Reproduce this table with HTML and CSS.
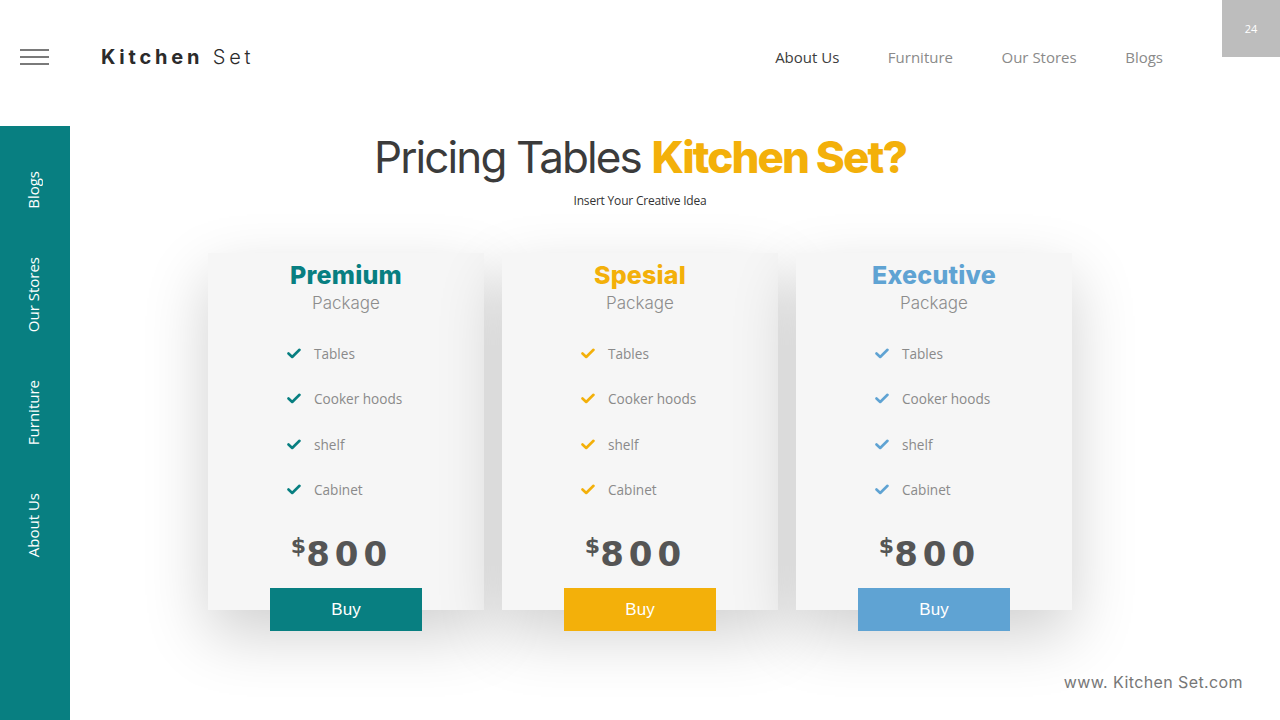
FILE: index.html
```html
<!DOCTYPE html>
<html lang="en">
<head>
<meta charset="utf-8">
<title>Kitchen Set - Pricing Tables</title>
<link rel="stylesheet" href="styles.css">
</head>
<body>
<div class="page">
  <header class="header">
    <div class="burger"><span></span><span></span><span></span></div>
    <div class="logo"><b>Kitchen</b> Set</div>
    <nav class="nav">
      <a class="active">About Us</a>
      <a>Furniture</a>
      <a>Our Stores</a>
      <a>Blogs</a>
    </nav>
    <div class="pagenum">24</div>
  </header>
  <div class="body">
    <aside class="sidebar">
      <span>Blogs</span>
      <span>Our Stores</span>
      <span>Furniture</span>
      <span>About Us</span>
    </aside>
    <main class="main">
      <h1 class="title">Pricing Tables <strong>Kitchen Set?</strong></h1>
      <p class="subtitle">Insert Your Creative Idea</p>
      <div class="cards">
        <div class="card teal">
          <h2 class="card-title">Premium</h2>
          <div class="card-sub">Package</div>
          <ul class="features">
            <li><svg viewBox="0 0 14 11"><path d="M1.5 5.5 L5.2 9 L12.5 1.8"/></svg>Tables</li>
            <li><svg viewBox="0 0 14 11"><path d="M1.5 5.5 L5.2 9 L12.5 1.8"/></svg>Cooker hoods</li>
            <li><svg viewBox="0 0 14 11"><path d="M1.5 5.5 L5.2 9 L12.5 1.8"/></svg>shelf</li>
            <li><svg viewBox="0 0 14 11"><path d="M1.5 5.5 L5.2 9 L12.5 1.8"/></svg>Cabinet</li>
          </ul>
          <div class="price"><sup>$</sup>800</div>
          <a class="buy">Buy</a>
        </div>
        <div class="card yellow">
          <h2 class="card-title">Spesial</h2>
          <div class="card-sub">Package</div>
          <ul class="features">
            <li><svg viewBox="0 0 14 11"><path d="M1.5 5.5 L5.2 9 L12.5 1.8"/></svg>Tables</li>
            <li><svg viewBox="0 0 14 11"><path d="M1.5 5.5 L5.2 9 L12.5 1.8"/></svg>Cooker hoods</li>
            <li><svg viewBox="0 0 14 11"><path d="M1.5 5.5 L5.2 9 L12.5 1.8"/></svg>shelf</li>
            <li><svg viewBox="0 0 14 11"><path d="M1.5 5.5 L5.2 9 L12.5 1.8"/></svg>Cabinet</li>
          </ul>
          <div class="price"><sup>$</sup>800</div>
          <a class="buy">Buy</a>
        </div>
        <div class="card blue">
          <h2 class="card-title">Executive</h2>
          <div class="card-sub">Package</div>
          <ul class="features">
            <li><svg viewBox="0 0 14 11"><path d="M1.5 5.5 L5.2 9 L12.5 1.8"/></svg>Tables</li>
            <li><svg viewBox="0 0 14 11"><path d="M1.5 5.5 L5.2 9 L12.5 1.8"/></svg>Cooker hoods</li>
            <li><svg viewBox="0 0 14 11"><path d="M1.5 5.5 L5.2 9 L12.5 1.8"/></svg>shelf</li>
            <li><svg viewBox="0 0 14 11"><path d="M1.5 5.5 L5.2 9 L12.5 1.8"/></svg>Cabinet</li>
          </ul>
          <div class="price"><sup>$</sup>800</div>
          <a class="buy">Buy</a>
        </div>
      </div>
      <div class="footer">www. Kitchen Set.com</div>
    </main>
  </div>
</div>
</body>
</html>
```
FILE: styles.css
```css
* { box-sizing: border-box; }
html, body { margin: 0; padding: 0; background: #fff; }
body { font-family: "Open Sans", "Noto Sans", sans-serif; }

.page {
  width: 1280px;
  height: 720px;
  display: flex;
  flex-direction: column;
  overflow: hidden;
}

/* header */
.header {
  height: 126px;
  padding-bottom: 13px;
  display: flex;
  align-items: center;
  flex-shrink: 0;
}
.burger {
  margin-left: 20px;
  width: 29px;
  display: flex;
  flex-direction: column;
  gap: 5px;
}
.burger span {
  display: block;
  height: 2px;
  background: #7a7a7a;
}
.logo {
  margin-left: 52px;
  font-family: "Inter", sans-serif;
  font-size: 20px;
  letter-spacing: 3.8px;
  color: #2b2b2b;
  font-weight: 300;
}
.logo b { font-weight: 700; }
.nav {
  margin-left: auto;
  display: flex;
  gap: 48.5px;
  margin-right: 59px;
}
.nav a {
  font-family: "Open Sans", sans-serif;
  font-size: 15px;
  color: #8a8a8a;
}
.nav a.active { color: #3d3d3d; }
.pagenum {
  align-self: flex-start;
  width: 58px;
  height: 57px;
  background: #bdbdbd;
  color: #fff;
  font-family: "Open Sans", sans-serif;
  font-size: 11px;
  display: flex;
  justify-content: center;
  padding-top: 21px;
}

/* body */
.body {
  flex: 1;
  display: flex;
  min-height: 0;
}
.sidebar {
  width: 70px;
  flex-shrink: 0;
  background: #087f81;
  display: flex;
  flex-direction: column;
  align-items: center;
  padding-top: 45px;
  padding-right: 4px;
  gap: 48px;
}
.sidebar span {
  writing-mode: vertical-rl;
  transform: rotate(180deg);
  color: #fff;
  font-family: "Open Sans", sans-serif;
  font-size: 15px;
  line-height: 20px;
}

.main {
  flex: 1;
  display: flex;
  flex-direction: column;
  align-items: center;
  padding-right: 70px;
  padding-top: 3px;
}
.title {
  margin: 0;
  font-family: "Inter", sans-serif;
  font-size: 44px;
  line-height: 56px;
  font-weight: 400;
  letter-spacing: -1.9px;
  color: #3b3b3b;
}
.title strong {
  font-weight: 800;
  color: #f3b00a;
}
.subtitle {
  margin: 8px 0 0;
  font-family: "Open Sans", sans-serif;
  font-size: 12px;
  line-height: 16px;
  color: #333;
  letter-spacing: -0.2px;
}

.cards {
  margin-top: 44px;
  display: flex;
  gap: 18px;
}
.card {
  width: 276px;
  background: #f6f6f6;
  box-shadow: 0 24px 60px rgba(0, 0, 0, 0.19);
  display: flex;
  flex-direction: column;
  align-items: center;
  padding-top: 8px;
}
.card-title {
  margin: 0;
  font-family: "Inter", sans-serif;
  font-weight: 800;
  font-size: 25px;
  line-height: 28px;
  letter-spacing: 0.2px;
}
.card-sub {
  margin-top: 3px;
  font-family: "Inter", sans-serif;
  font-size: 17px;
  line-height: 22px;
  color: #8c8c8c;
  font-weight: 300;
}
.features {
  list-style: none;
  margin: 17px 0 0;
  padding: 0 0 0 79px;
  align-self: stretch;
}
.features li {
  height: 45.3px;
  display: flex;
  align-items: center;
  font-family: "Open Sans", sans-serif;
  font-size: 13.6px;
  color: #8a8a8a;
}
.features svg {
  width: 14px;
  height: 11px;
  margin-right: 13px;
  fill: none;
  stroke-width: 2.6;
  stroke-linecap: round;
  stroke-linejoin: round;
}
.price {
  margin-top: 22px;
  font-family: "DejaVu Sans", sans-serif;
  font-weight: 700;
  font-size: 34px;
  line-height: 40px;
  letter-spacing: 5px;
  color: #555;
  margin-right: 9px;
}
.price sup {
  font-size: 22px;
  letter-spacing: 0;
  vertical-align: 13px;
  line-height: 0;
  margin-right: 0;
}
.buy {
  margin-top: 14px;
  margin-bottom: -21px;
  width: 152px;
  height: 43px;
  display: flex;
  align-items: center;
  justify-content: center;
  color: #fff;
  font-family: "Liberation Sans", Arial, sans-serif;
  font-size: 17px;
}

.teal .card-title { color: #087f81; }
.teal svg { stroke: #087f81; }
.teal .buy { background: #087f81; }
.yellow .card-title { color: #f3b00a; }
.yellow svg { stroke: #f3b00a; }
.yellow .buy { background: #f3b00a; }
.blue .card-title { color: #5fa3d3; }
.blue svg { stroke: #5fa3d3; }
.blue .buy { background: #5fa3d3; }

.footer {
  margin-top: auto;
  margin-bottom: 27px;
  align-self: flex-end;
  margin-right: -33px;
  font-family: "Inter", sans-serif;
  font-size: 16px;
  line-height: 22px;
  letter-spacing: 0.4px;
  color: #777;
}
```
